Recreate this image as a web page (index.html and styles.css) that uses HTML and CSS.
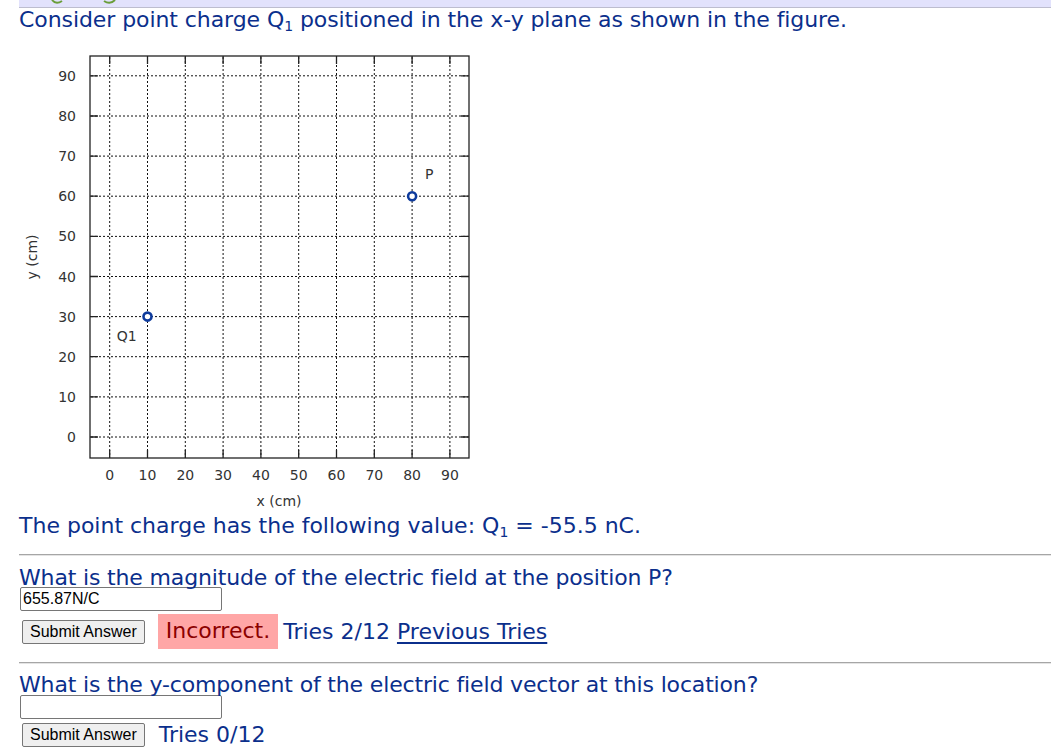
FILE: index.html
```html
<!DOCTYPE html>
<html>
<head>
<meta charset="utf-8">
<link rel="stylesheet" href="styles.css">
</head>
<body>
<div class="topbar">
  <svg class="navicons" width="100" height="7" viewBox="0 0 100 7">
    <path d="M33 0 Q37 5 43 1" stroke="#6a9e3a" stroke-width="2" fill="none"/>
    <path d="M85 1 Q91 5 96 0" stroke="#6a9e3a" stroke-width="2" fill="none"/>
  </svg>
</div>
<div class="content">
  <p class="line heading">Consider point charge Q<sub>1</sub> positioned in the x-y plane as shown in the figure.</p>

  <svg class="figure" width="460" height="470" viewBox="19 40 460 470">
    <g class="grid" stroke="#111" stroke-width="1" stroke-dasharray="2 2" fill="none">
      <line x1="109.7" y1="57" x2="109.7" y2="457"/>
      <line x1="147.5" y1="57" x2="147.5" y2="457"/>
      <line x1="185.3" y1="57" x2="185.3" y2="457"/>
      <line x1="223.1" y1="57" x2="223.1" y2="457"/>
      <line x1="260.9" y1="57" x2="260.9" y2="457"/>
      <line x1="298.7" y1="57" x2="298.7" y2="457"/>
      <line x1="336.5" y1="57" x2="336.5" y2="457"/>
      <line x1="374.3" y1="57" x2="374.3" y2="457"/>
      <line x1="412.1" y1="57" x2="412.1" y2="457"/>
      <line x1="449.9" y1="57" x2="449.9" y2="457"/>
      <line x1="91" y1="437" x2="468" y2="437"/>
      <line x1="91" y1="396.9" x2="468" y2="396.9"/>
      <line x1="91" y1="356.7" x2="468" y2="356.7"/>
      <line x1="91" y1="316.6" x2="468" y2="316.6"/>
      <line x1="91" y1="276.5" x2="468" y2="276.5"/>
      <line x1="91" y1="236.4" x2="468" y2="236.4"/>
      <line x1="91" y1="196.2" x2="468" y2="196.2"/>
      <line x1="91" y1="156.1" x2="468" y2="156.1"/>
      <line x1="91" y1="116" x2="468" y2="116"/>
      <line x1="91" y1="75.8" x2="468" y2="75.8"/>
    </g>
    <g class="ticks" stroke="#222" stroke-width="1.3" fill="none">
      <path d="M109.7 56v8M147.5 56v8M185.3 56v8M223.1 56v8M260.9 56v8M298.7 56v8M336.5 56v8M374.3 56v8M412.1 56v8M449.9 56v8"/>
      <path d="M109.7 458v-8M147.5 458v-8M185.3 458v-8M223.1 458v-8M260.9 458v-8M298.7 458v-8M336.5 458v-8M374.3 458v-8M412.1 458v-8M449.9 458v-8"/>
      <path d="M90 437h8M90 396.9h8M90 356.7h8M90 316.6h8M90 276.5h8M90 236.4h8M90 196.2h8M90 156.1h8M90 116h8M90 75.8h8"/>
      <path d="M469 437h-8M469 396.9h-8M469 356.7h-8M469 316.6h-8M469 276.5h-8M469 236.4h-8M469 196.2h-8M469 156.1h-8M469 116h-8M469 75.8h-8"/>
      <rect x="90" y="56" width="379" height="402"/>
    </g>
    <g class="ylabels" text-anchor="end" dominant-baseline="central">
      <text x="76" y="437">0</text>
      <text x="76" y="396.9">10</text>
      <text x="76" y="356.7">20</text>
      <text x="76" y="316.6">30</text>
      <text x="76" y="276.5">40</text>
      <text x="76" y="236.4">50</text>
      <text x="76" y="196.2">60</text>
      <text x="76" y="156.1">70</text>
      <text x="76" y="116">80</text>
      <text x="76" y="75.8">90</text>
    </g>
    <g class="xlabels" text-anchor="middle" dominant-baseline="central">
      <text x="109.7" y="475">0</text>
      <text x="147.5" y="475">10</text>
      <text x="185.3" y="475">20</text>
      <text x="223.1" y="475">30</text>
      <text x="260.9" y="475">40</text>
      <text x="298.7" y="475">50</text>
      <text x="336.5" y="475">60</text>
      <text x="374.3" y="475">70</text>
      <text x="412.1" y="475">80</text>
      <text x="449.9" y="475">90</text>
    </g>
    <text class="axis" x="279" y="501" text-anchor="middle" dominant-baseline="central">x (cm)</text>
    <text class="axis" x="0" y="0" text-anchor="middle" dominant-baseline="central" transform="translate(32 257) rotate(-90)">y (cm)</text>
    <text class="plabel" x="126.7" y="336" text-anchor="middle" dominant-baseline="central">Q1</text>
    <text class="plabel" x="429.3" y="174" text-anchor="middle" dominant-baseline="central">P</text>
    <circle cx="147.5" cy="316.6" r="4" fill="#fff" stroke="#0d3a9c" stroke-width="2.6"/>
    <circle cx="412.1" cy="196.2" r="4" fill="#fff" stroke="#0d3a9c" stroke-width="2.6"/>
  </svg>

  <p class="line value">The point charge has the following value: Q<sub>1</sub> = -55.5 nC.</p>

  <hr class="sep sep-first">

  <p class="line question q-first">What is the magnitude of the electric field at the position P?</p>
  <input class="answer" type="text" value="655.87N/C">
  <div class="submit-row row-first">
    <button class="submit" type="button">Submit Answer</button>
    <span class="incorrect">Incorrect.</span>
    <span class="tries">Tries 2/12</span>
    <a class="prev" href="#">Previous Tries</a>
  </div>

  <hr class="sep sep-second">

  <p class="line question q-second">What is the y-component of the electric field vector at this location?</p>
  <input class="answer answer-second" type="text" value="">
  <div class="submit-row row-second">
    <button class="submit" type="button">Submit Answer</button>
    <span class="tries tries-only">Tries 0/12</span>
  </div>
</div>
</body>
</html>
```

FILE: styles.css
```css
html, body {
  margin: 0;
  padding: 0;
  background: #ffffff;
}

body {
  font-family: "DejaVu Sans", Verdana, sans-serif;
  color: #0b2f8c;
  overflow: hidden;
}

.topbar {
  margin-left: 19px;
  height: 7px;
  background: #e2e2fc;
  border-bottom: 1px solid #bdbdcf;
  overflow: hidden;
}

.navicons {
  display: block;
}

.content {
  padding-left: 19px;
}

.line {
  margin: 0;
  font-size: 22px;
  line-height: 24px;
  white-space: nowrap;
}

.heading {
  letter-spacing: -0.08px;
}

.question {
  letter-spacing: -0.16px;
}

.line sub {
  font-size: 14px;
  line-height: 0;
  vertical-align: -4px;
}

.figure {
  display: block;
  margin-top: 8px;
}

.figure text {
  font-family: "DejaVu Sans", Verdana, sans-serif;
  font-size: 14px;
  fill: #333333;
}

.value {
  margin-top: 4px;
}

.sep {
  margin: 0;
  height: 0;
  border: none;
  border-top: 1px solid #a6a6a6;
  border-bottom: 1px solid #e4e4e4;
}

.sep-first {
  margin-top: 16px;
}

.q-first {
  margin-top: 10px;
}

.answer {
  display: block;
  box-sizing: border-box;
  width: 202px;
  height: 24px;
  margin: -3px 0 0 1px;
  padding: 0 2px;
  border: 1px solid #767676;
  border-radius: 2px;
  font-family: "Liberation Sans", Arial, sans-serif;
  font-size: 16px;
  color: #000;
  background: #fff;
}

.submit-row {
  display: flex;
  align-items: center;
  white-space: nowrap;
  font-size: 22px;
  line-height: 24px;
}

.row-first {
  margin-top: 3px;
  height: 35px;
}

.submit {
  box-sizing: border-box;
  height: 24px;
  margin: 0 0 0 3px;
  padding: 1px 7px;
  border: 1px solid #767676;
  border-radius: 2px;
  background: #efefef;
  font-family: "Liberation Sans", Arial, sans-serif;
  font-size: 16px;
  color: #000;
}

.incorrect {
  margin-left: 13px;
  padding: 5px 8px 6px 8px;
  background: #ffa6a6;
  color: #8b0000;
}

.tries {
  margin-left: 5px;
}

.tries-only {
  margin-left: 14px;
}

.prev {
  margin-left: 7px;
  color: #0b2f8c;
  text-decoration: underline;
  text-decoration-thickness: 2px;
  text-underline-offset: 3px;
}

.sep-second {
  margin-top: 13px;
}

.q-second {
  margin-top: 9px;
}

.answer-second {
  margin-top: -2px;
}

.row-second {
  margin-top: 4px;
  height: 24px;
}
```
